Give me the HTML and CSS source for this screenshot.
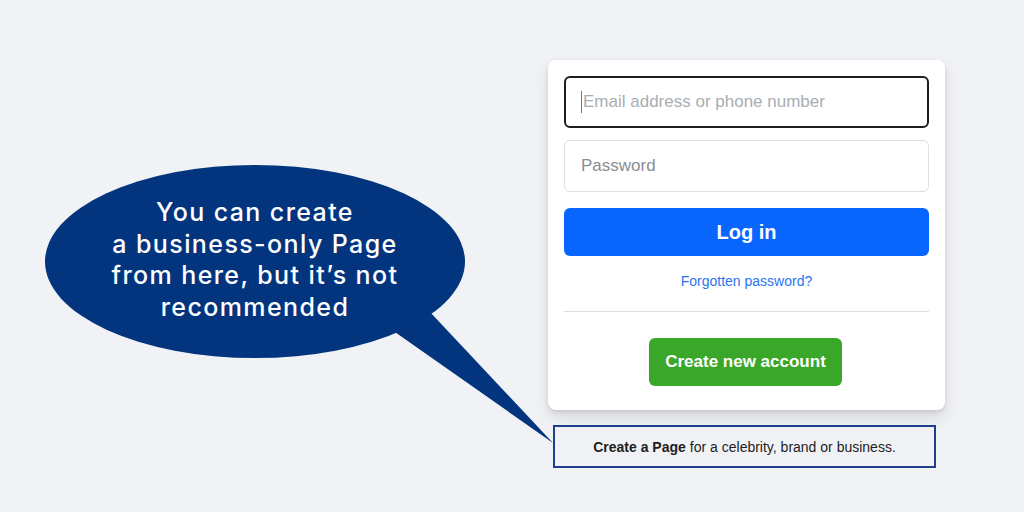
FILE: index.html
```html
<!DOCTYPE html>
<html lang="en">
<head>
<meta charset="utf-8">
<title>Log in</title>
<link rel="stylesheet" href="styles.css">
</head>
<body>
<main class="page">
  <section class="login">
    <div class="card">
      <div class="field focused"><span class="caret"></span><span class="ph">Email address or phone number</span></div>
      <div class="field"><span class="ph dim">Password</span></div>
      <button class="btn-login">Log in</button>
      <a class="forgot">Forgotten password?</a>
      <hr class="divider">
      <div class="create-row"><button class="btn-create">Create new account</button></div>
    </div>
    <p class="page-link"><b>Create a Page</b> for a celebrity, brand or business.</p>
  </section>
  <div class="bubble">
    <svg class="bubble-shape" width="560" height="300" viewBox="0 150 560 300" aria-hidden="true">
      <ellipse cx="255" cy="261.5" rx="210" ry="96.5" fill="#03357f"/>
      <polygon points="392,330 430,312 553,443" fill="#03357f"/>
    </svg>
    <p class="bubble-text">You can create<br>a business-only Page<br>from here, but it’s not<br>recommended</p>
  </div>
</main>
</body>
</html>
```

FILE: styles.css
```css
* { box-sizing: border-box; }
html, body { margin: 0; padding: 0; }
body {
  background: #f0f2f5;
  font-family: "Liberation Sans", Arial, sans-serif;
  width: 1024px;
  height: 512px;
  overflow: hidden;
}
.page {
  position: relative;
  height: 512px;
  display: flex;
  padding: 60px 0 0 548px;
}
.login {
  width: 397px;
  display: flex;
  flex-direction: column;
}
.card {
  background: #fff;
  border-radius: 8px;
  box-shadow: 0 2px 4px rgba(0,0,0,0.1), 0 8px 16px rgba(0,0,0,0.1);
  padding: 16px 16px 24px;
  display: flex;
  flex-direction: column;
}
.field {
  height: 52px;
  border: 1px solid #dddfe2;
  border-radius: 6px;
  display: flex;
  align-items: center;
  padding-left: 16px;
  font-size: 17px;
  margin-bottom: 12px;
}
.field.focused {
  border: 2px solid #1c1e21;
  padding-left: 15px;
}
.caret {
  display: inline-block;
  width: 1px;
  height: 22px;
  background: #3b7cf0;
  margin-right: 1px;
}
.ph { color: #a9adb3; }
.ph.dim { color: #8a8d91; }
.btn-login {
  margin-top: 4px;
  height: 48px;
  border: none;
  border-radius: 6px;
  background: #0866ff;
  color: #fff;
  font-family: "Liberation Sans", Arial, sans-serif;
  font-size: 20px;
  font-weight: bold;
}
.forgot {
  margin-top: 16px;
  text-align: center;
  color: #2a74f0;
  font-size: 14px;
  line-height: 19px;
}
.divider {
  margin: 20px 0 0;
  border: none;
  border-top: 1px solid #dadde1;
}
.create-row {
  display: flex;
  justify-content: center;
  margin-top: 26px;
}
.btn-create {
  height: 48px;
  width: 193px;
  border: none;
  border-radius: 6px;
  background: #3aa72a;
  color: #fff;
  font-family: "Liberation Sans", Arial, sans-serif;
  font-size: 17px;
  font-weight: bold;
  margin-right: 2px;
}
.page-link {
  margin: 15px 0 0 5px;
  width: 383px;
  height: 43px;
  border: 2px solid #1e3f8b;
  display: flex;
  align-items: center;
  justify-content: center;
  font-size: 14px;
  color: #1c1e21;
}
.page-link b { margin-right: 4px; }
.bubble {
  position: absolute;
  left: 0;
  top: 150px;
  width: 560px;
  height: 300px;
}
.bubble-shape { display: block; }
.bubble-text {
  position: absolute;
  left: 45px;
  top: 47px;
  width: 420px;
  margin: 0;
  text-align: center;
  color: #fff;
  font-family: Inter, "Open Sans", sans-serif;
  font-size: 25px;
  letter-spacing: 1.4px;
  line-height: 31.6px;
  font-weight: 500;
}
```
